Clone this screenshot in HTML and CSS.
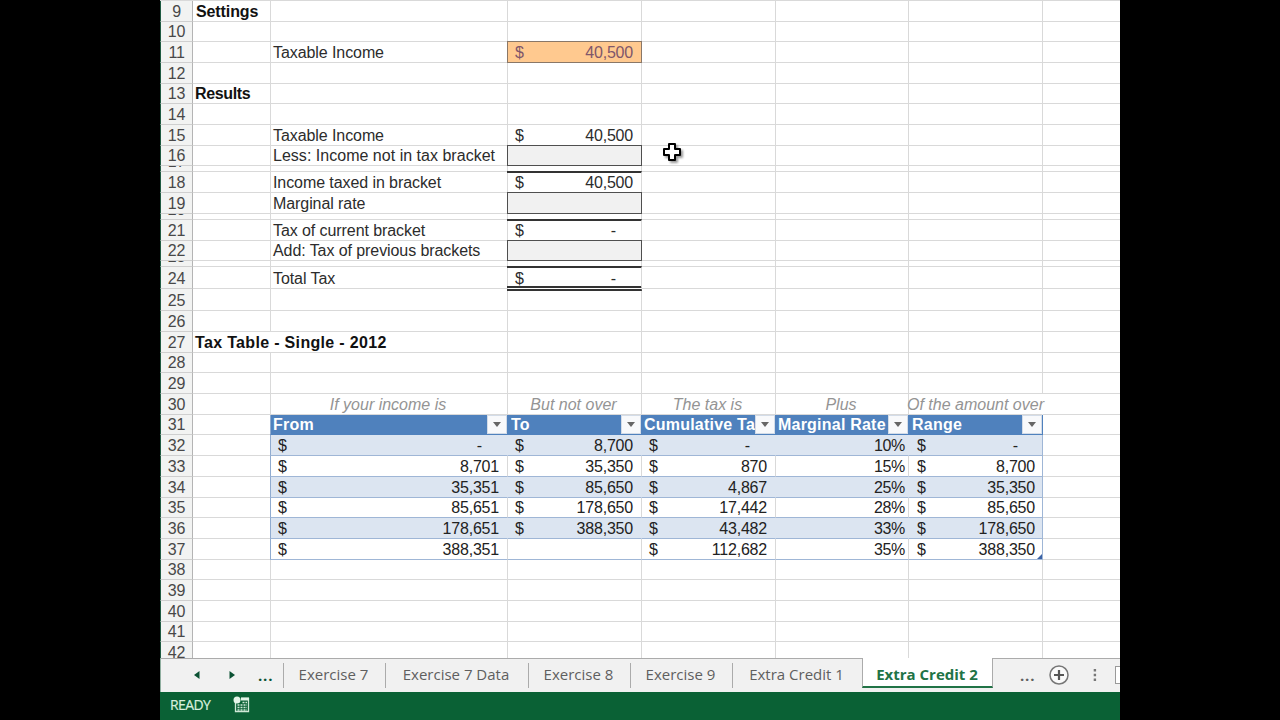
FILE: index.html
```html
<!DOCTYPE html>
<html lang="en">
<head>
<meta charset="utf-8">
<title>Tax Table</title>
<link rel="stylesheet" href="styles.css">
</head>
<body>
<div class="app">
<main class="sheet">
<div class="row first"><b class="num">9</b><i class="c bold indent">Settings</i><i class="c"></i><i class="c"></i><i class="c"></i><i class="c"></i><i class="c"></i><i class="c last"></i></div>
<div class="row h20"><b class="num">10</b><i class="c"></i><i class="c"></i><i class="c"></i><i class="c"></i><i class="c"></i><i class="c"></i><i class="c last"></i></div>
<div class="row"><b class="num">11</b><i class="c"></i><i class="c label">Taxable Income</i><i class="c money box assume"><span>$</span><span>40,500</span></i><i class="c"></i><i class="c"></i><i class="c"></i><i class="c last"></i></div>
<div class="row"><b class="num">12</b><i class="c"></i><i class="c"></i><i class="c"></i><i class="c"></i><i class="c"></i><i class="c"></i><i class="c last"></i></div>
<div class="row h20"><b class="num">13</b><i class="c bold tight">Results</i><i class="c"></i><i class="c"></i><i class="c"></i><i class="c"></i><i class="c"></i><i class="c last"></i></div>
<div class="row"><b class="num">14</b><i class="c"></i><i class="c"></i><i class="c"></i><i class="c"></i><i class="c"></i><i class="c"></i><i class="c last"></i></div>
<div class="row"><b class="num">15</b><i class="c"></i><i class="c label">Taxable Income</i><i class="c money"><span>$</span><span>40,500</span></i><i class="c"></i><i class="c"></i><i class="c"></i><i class="c last"></i></div>
<div class="row h20"><b class="num">16</b><i class="c"></i><i class="c label loose">Less: Income not in tax bracket</i><i class="c box"></i><i class="c"></i><i class="c"></i><i class="c"></i><i class="c last"></i></div>
<div class="row h6"><b class="num">17</b><i class="c"></i><i class="c"></i><i class="c"></i><i class="c"></i><i class="c"></i><i class="c"></i><i class="c last"></i></div>
<div class="row"><b class="num">18</b><i class="c"></i><i class="c label">Income taxed in bracket</i><i class="c money sum"><span>$</span><span>40,500</span></i><i class="c"></i><i class="c"></i><i class="c"></i><i class="c last"></i></div>
<div class="row"><b class="num">19</b><i class="c"></i><i class="c label">Marginal rate</i><i class="c box"></i><i class="c"></i><i class="c"></i><i class="c"></i><i class="c last"></i></div>
<div class="row h6"><b class="num">20</b><i class="c"></i><i class="c"></i><i class="c"></i><i class="c"></i><i class="c"></i><i class="c"></i><i class="c last"></i></div>
<div class="row"><b class="num">21</b><i class="c"></i><i class="c label">Tax of current bracket</i><i class="c money sum"><span>$</span><span class="dash">-</span></i><i class="c"></i><i class="c"></i><i class="c"></i><i class="c last"></i></div>
<div class="row h20"><b class="num">22</b><i class="c"></i><i class="c label">Add: Tax of previous brackets</i><i class="c box"></i><i class="c"></i><i class="c"></i><i class="c"></i><i class="c last"></i></div>
<div class="row h6"><b class="num">23</b><i class="c"></i><i class="c"></i><i class="c"></i><i class="c"></i><i class="c"></i><i class="c"></i><i class="c last"></i></div>
<div class="row h22 raised"><b class="num">24</b><i class="c"></i><i class="c label">Total Tax</i><i class="c money sum total"><span>$</span><span class="dash">-</span></i><i class="c"></i><i class="c"></i><i class="c"></i><i class="c last"></i></div>
<div class="row h22"><b class="num">25</b><i class="c"></i><i class="c"></i><i class="c"></i><i class="c"></i><i class="c"></i><i class="c"></i><i class="c last"></i></div>
<div class="row"><b class="num">26</b><i class="c"></i><i class="c"></i><i class="c"></i><i class="c"></i><i class="c"></i><i class="c"></i><i class="c last"></i></div>
<div class="row"><b class="num">27</b><i class="c bold title">Tax Table - Single - 2012</i><i class="c"></i><i class="c"></i><i class="c"></i><i class="c"></i><i class="c last"></i></div>
<div class="row h20"><b class="num">28</b><i class="c"></i><i class="c"></i><i class="c"></i><i class="c"></i><i class="c"></i><i class="c"></i><i class="c last"></i></div>
<div class="row"><b class="num">29</b><i class="c"></i><i class="c"></i><i class="c"></i><i class="c"></i><i class="c"></i><i class="c"></i><i class="c last"></i></div>
<div class="row"><b class="num">30</b><i class="c"></i><i class="c note">If your income is</i><i class="c note">But not over</i><i class="c note">The tax is</i><i class="c note">Plus</i><i class="c note wide">Of the amount over</i><i class="c last"></i></div>
<div class="row h20"><b class="num">31</b><i class="c"></i><i class="c th lead"><span>From</span><u class="filter"></u></i><i class="c th nudge"><span>To</span><u class="filter"></u></i><i class="c th"><span>Cumulative Tax</span><u class="filter"></u></i><i class="c th"><span>Marginal Rate</span><u class="filter"></u></i><i class="c th nudge"><span>Range</span><u class="filter"></u></i><i class="c last"></i></div>
<div class="row data band"><b class="num">32</b><i class="c"></i><i class="c money lead"><span>$</span><span class="dash">-</span></i><i class="c money"><span>$</span><span>8,700</span></i><i class="c money"><span>$</span><span class="dash">-</span></i><i class="c pct">10%</i><i class="c money end"><span>$</span><span class="dash">-</span></i><i class="c last"></i></div>
<div class="row data"><b class="num">33</b><i class="c"></i><i class="c money lead"><span>$</span><span>8,701</span></i><i class="c money"><span>$</span><span>35,350</span></i><i class="c money"><span>$</span><span>870</span></i><i class="c pct">15%</i><i class="c money end"><span>$</span><span>8,700</span></i><i class="c last"></i></div>
<div class="row data band"><b class="num">34</b><i class="c"></i><i class="c money lead"><span>$</span><span>35,351</span></i><i class="c money"><span>$</span><span>85,650</span></i><i class="c money"><span>$</span><span>4,867</span></i><i class="c pct">25%</i><i class="c money end"><span>$</span><span>35,350</span></i><i class="c last"></i></div>
<div class="row data h20"><b class="num">35</b><i class="c"></i><i class="c money lead"><span>$</span><span>85,651</span></i><i class="c money"><span>$</span><span>178,650</span></i><i class="c money"><span>$</span><span>17,442</span></i><i class="c pct">28%</i><i class="c money end"><span>$</span><span>85,650</span></i><i class="c last"></i></div>
<div class="row data band"><b class="num">36</b><i class="c"></i><i class="c money lead"><span>$</span><span>178,651</span></i><i class="c money"><span>$</span><span>388,350</span></i><i class="c money"><span>$</span><span>43,482</span></i><i class="c pct">33%</i><i class="c money end"><span>$</span><span>178,650</span></i><i class="c last"></i></div>
<div class="row data"><b class="num">37</b><i class="c"></i><i class="c money lead"><span>$</span><span>388,351</span></i><i class="c money"></i><i class="c money"><span>$</span><span>112,682</span></i><i class="c pct">35%</i><i class="c money end corner"><span>$</span><span>388,350</span></i><i class="c last"></i></div>
<div class="row h20"><b class="num">38</b><i class="c"></i><i class="c"></i><i class="c"></i><i class="c"></i><i class="c"></i><i class="c"></i><i class="c last"></i></div>
<div class="row"><b class="num">39</b><i class="c"></i><i class="c"></i><i class="c"></i><i class="c"></i><i class="c"></i><i class="c"></i><i class="c last"></i></div>
<div class="row"><b class="num">40</b><i class="c"></i><i class="c"></i><i class="c"></i><i class="c"></i><i class="c"></i><i class="c"></i><i class="c last"></i></div>
<div class="row h20"><b class="num">41</b><i class="c"></i><i class="c"></i><i class="c"></i><i class="c"></i><i class="c"></i><i class="c"></i><i class="c last"></i></div>
<div class="row cut"><b class="num">42</b><i class="c"></i><i class="c"></i><i class="c"></i><i class="c"></i><i class="c"></i><i class="c"></i><i class="c last"></i></div>
<svg class="cursor" width="26" height="26" viewBox="0 0 26 26"><path d="M9 4h6v5h5v6h-5v5H9v-5H4V9h5z" fill="#fff" stroke="#000" stroke-width="2" stroke-linejoin="round"/></svg>
</main>
<nav class="tabs">
<div class="scroll">
<svg width="6" height="8" viewBox="0 0 6 8"><path d="M5.500 0v8L0 4z" fill="#0c5234"/></svg>
<svg width="6" height="8" viewBox="0 0 6 8"><path d="M.5 0v8L6 4z" fill="#0c5234"/></svg>
<span class="dots green">...</span>
</div>
<a class="tab">Exercise 7</a>
<a class="tab data-tab">Exercise 7 Data</a>
<a class="tab">Exercise 8</a>
<a class="tab">Exercise 9</a>
<a class="tab extra">Extra Credit 1</a>
<a class="tab active">Extra Credit 2</a>
<div class="tools">
<span class="dots">...</span>
<svg class="add" width="22" height="22" viewBox="0 0 22 22"><circle cx="11" cy="11" r="9" fill="#fafafa" stroke="#777" stroke-width="1.500"/><path d="M11 6v10M6 11h10" stroke="#555" stroke-width="2.200"/></svg>
<svg class="grip" width="4" height="14" viewBox="0 0 4 14"><path d="M.7 1h2.400v2.400H.7zM.7 5.800h2.400v2.400H.7zM.7 10.600h2.400V13H.7z" fill="#777"/></svg>
<span class="scrollbtn"></span>
</div>
</nav>
<footer class="status">
<span class="ready">READY</span>
<svg width="17" height="17" viewBox="0 0 17 17"><path d="M2.500 7v8.500h13v-13H8" fill="none" stroke="#cfe8d6" stroke-width="1.300"/><path d="M8 1.500h8v3H8z" fill="#e4f5e8"/><circle cx="4" cy="4" r="3.500" fill="#e4f5e8"/><path d="M4.500 9h9.500M4.500 11.500h9.500M4.500 14h9.500M9.500 6.500H14" stroke="#cfe8d6" stroke-width="1.400" stroke-dasharray="2 1"/></svg>
</footer>
</div>
</body>
</html>
```
FILE: styles.css
```css
* { box-sizing: border-box; }
body {
  margin: 0;
  background: #000;
  font-family: "Liberation Sans", Arial, sans-serif;
  color: #2c2c2c;
}
.app {
  width: 960px;
  height: 720px;
  margin: 0 auto;
  display: flex;
  flex-direction: column;
  overflow: hidden;
  background: #fff;
}
.sheet {
  position: relative;
  height: 658px;
  flex: none;
  overflow: hidden;
  font-size: 16px;
  line-height: 18px;
}
.row {
  display: grid;
  grid-template-columns: 33px 78px 237px 134px 134px 133px 134px 77px;
  grid-template-rows: 100%;
  height: 21px;
}
.first { height: 22px; border-top: 1px solid #d9d9d9; }
.h20 { height: 20px; }
.h22 { height: 22px; }
.h6 { height: 6px; }
.cut { height: 16px; }
.num, .c {
  display: flex;
  align-items: flex-end;
  min-width: 0;
  font-style: normal;
  font-weight: normal;
  white-space: nowrap;
  border-right: 1px solid #d9d9d9;
  border-bottom: 1px solid #d9d9d9;
}
.num {
  justify-content: center;
  overflow: hidden;
  background: #f2f3f2;
  border-left: 1px solid #1f5a41;
  border-right-color: #b4b4b4;
  border-bottom-color: #cfcfcf;
  color: #484848;
  letter-spacing: -0.2px;
}
.c { padding-left: 2px; }
.last { border-right: 0; }
.cut .num { align-items: flex-start; padding-top: 2px; }
.cut .num, .cut .c { border-bottom: 0; }
.bold { font-weight: bold; color: #111; }
.indent { padding-left: 3px; letter-spacing: -0.1px; }
.tight { letter-spacing: -0.35px; }
.label { letter-spacing: -0.08px; }
.loose { letter-spacing: 0.02px; }
.title { grid-column: span 2; letter-spacing: 0.33px; }
.money {
  justify-content: space-between;
  padding: 0 8px 0 7px;
  letter-spacing: -0.2px;
}
.dash { margin-right: 17px; }
.end { padding: 0 7px 0 8px; }
.box {
  position: relative;
  margin: -1px 0 0 -1px;
  background: #f1f1f1;
  border: 1px solid #4f4f4f;
}
.assume {
  padding-left: 7px;
  background: #ffc98f;
  border-color: #8a7767;
  color: #80566a;
}
.sum { margin: -1px 0 0 -1px; padding-left: 8px; border-top: 2px solid #333; position: relative; }
.raised { position: relative; }
.total { margin-bottom: -2px; border-bottom: 5px double #333; }
.total span { margin-bottom: -2px; }
.note {
  justify-content: center;
  padding: 0 2px 0 0;
  font-style: italic;
  color: #949494;
}
.wide { padding: 0; border-right-color: transparent; }
.th {
  justify-content: space-between;
  background: #4f81bd;
  border-color: #4f81bd;
  color: #fff;
  font-weight: bold;
  letter-spacing: 0.22px;
  overflow: hidden;
}
.th span { flex: 1; min-width: 0; overflow: hidden; }
.nudge { padding-left: 3px; }
.lead { margin-left: -1px; border-left: 1px solid #8fabd0; }
.filter {
  flex: none;
  display: flex;
  align-items: center;
  justify-content: center;
  width: 20px;
  height: 19px;
  padding-right: 1px;
  background: #f8f9fb;
  border: 1px solid #d3dce8;
}
.filter::after {
  content: "";
  border: 4px solid transparent;
  border-top: 5px solid #666;
  border-bottom: 0;
}
.data .lead, .data .lead ~ .c:not(.last) { border-bottom-color: #9fb6d6; color: #222; }
.band .lead, .band .lead ~ .c:not(.last) { background: #dce5f1; border-right-color: #dce5f1; }
.data .end, .band .lead ~ .end:not(.last) { border-right-color: #9fb6d6; }
.pct { justify-content: flex-end; padding-right: 3px; letter-spacing: -0.3px; }
.corner { position: relative; }
.corner::after {
  content: "";
  position: absolute;
  right: 0;
  bottom: 0;
  border-left: 5px solid transparent;
  border-bottom: 5px solid #3b62a5;
}
.cursor {
  position: absolute;
  left: 500px;
  top: 140px;
  filter: drop-shadow(2px 2px 1px rgba(0, 0, 0, 0.4));
}
.tabs {
  display: flex;
  flex: none;
  height: 34px;
  background: #f1f1f1;
  border-left: 1px solid #8fae9f;
  font-family: "Open Sans", "Noto Sans", sans-serif;
  font-size: 15px;
  color: #5f5f5f;
}
.scroll, .tools { display: flex; align-items: center; padding-bottom: 2px; border-top: 1px solid #ababab; }
.scroll { width: 122px; padding-left: 33px; }
.scroll svg + svg { margin-left: 29px; }
.dots { font-weight: bold; line-height: 20px; letter-spacing: 0.8px; }
.green { margin-left: 23px; color: #0c5234; }
.tab {
  position: relative;
  display: flex;
  align-items: center;
  justify-content: center;
  width: 102px;
  padding: 0 1px 4px 0;
  border-top: 1px solid #ababab;
  white-space: nowrap;
}
.tab::before {
  content: "";
  position: absolute;
  left: 0;
  top: 4px;
  height: 25px;
  border-left: 1px solid #ababab;
}
.data-tab { width: 143px; }
.extra { width: 130px; }
.active {
  width: 131px;
  height: 30px;
  padding: 3px 1px 0 0;
  background: #fff;
  border: 1px solid #ababab;
  border-top: 0;
  border-bottom: 2px solid #217346;
  color: #217346;
  font-weight: bold;
}
.active::before { display: none; }
.tools { flex: 1; padding-left: 27px; }
.add { margin-left: 13px; }
.grip { margin-left: 23px; }
.scrollbtn { margin-left: auto; width: 5px; height: 18px; background: #fff; border: 1px solid #999; border-right: 0; }
.status {
  display: flex;
  align-items: center;
  height: 28px;
  padding: 0 0 3px 10px;
  gap: 23px;
  background: #0a6135;
  color: #d9f0df;
  font: 14px "Open Sans", "Noto Sans", sans-serif;
}
.ready { width: 40px; letter-spacing: -0.6px; -webkit-text-stroke: 0.2px #d9f0df; }
```
